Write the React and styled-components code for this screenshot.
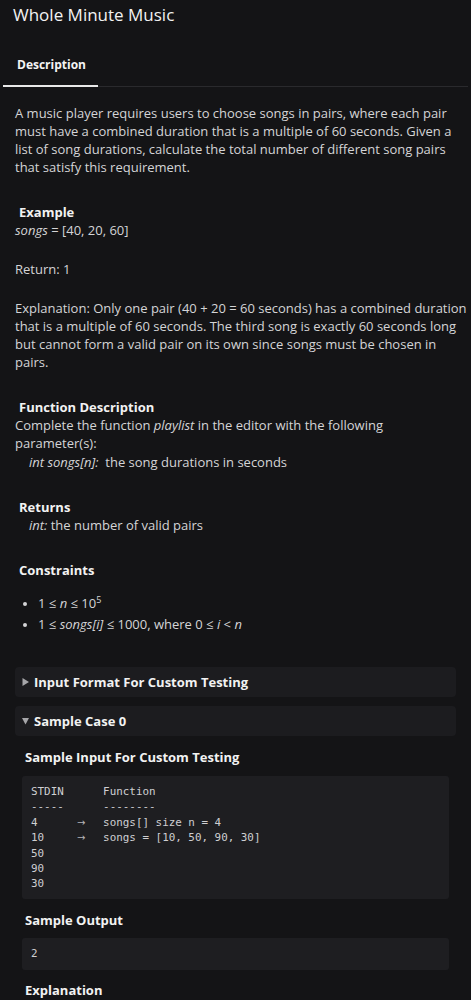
import React from 'react';
import styled, { createGlobalStyle } from 'styled-components';

const GlobalStyle = createGlobalStyle`
  html, body {
    margin: 0;
    padding: 0;
    background: #141416;
  }
  body {
    font-family: "Open Sans", "Noto Sans", sans-serif;
    color: #d4d4d6;
  }
`;

const Page = styled.div`
  width: 471px;
  min-height: 1000px;
  background: #141416;
  overflow: hidden;
`;

const Title = styled.h1`
  margin: 0;
  padding: 3px 13px 0;
  font-size: 17px;
  line-height: 23px;
  font-weight: 400;
  color: #f2f2f2;
`;

const Tabs = styled.div`
  margin: 30px 3px 0;
  display: flex;
  border-bottom: 1px solid #2a2a2d;
`;

const Tab = styled.div`
  width: 95px;
  padding: 0 0 11px 14px;
  box-sizing: border-box;
  font-size: 12px;
  line-height: 18px;
  font-weight: 700;
  color: #f4f4f4;
  border-bottom: ${({ active }) => (active ? '2px solid #e8e8e8' : 'none')};
  margin-bottom: -1px;
`;

const Body = styled.div`
  padding: 17px 15px 0;
`;

const Para = styled.p`
  margin: 0 ${({ wide }) => (wide ? -12 : -3)}px ${({ gap }) => gap ?? 21}px 0;
  font-size: 13px;
  line-height: 18px;
`;

const Heading = styled.h3`
  margin: 0;
  padding-left: 4px;
  font-size: 13px;
  line-height: 17px;
  font-weight: 700;
  color: #f2f2f2;
`;

const Section = styled.div`
  margin-top: ${({ top }) => top ?? 28}px;
`;

const Indent = styled.div`
  padding-left: 14px;
  font-size: 13px;
  line-height: 18px;
  margin-top: ${({ top }) => top ?? 0}px;
`;

const List = styled.ul`
  margin: 14px 0 0;
  padding-left: 23px;
  font-size: 13px;
  line-height: 21px;
  li::marker {
    font-size: 11px;
  }
`;

const Sup = styled.sup`
  font-size: 9px;
  line-height: 0;
`;

const Accordion = styled.div`
  margin-top: ${({ top }) => top ?? 9}px;
  background: #1c1c1f;
  border-radius: 4px;
  height: 30px;
  display: flex;
  align-items: center;
  padding-left: 7px;
  gap: 5px;
  font-size: 13px;
  font-weight: 700;
  color: #f2f2f2;
`;

const Caret = ({ down }) => (
  <svg width="7" height="8" viewBox="0 0 7 8" style={{ flex: 'none' }}>
    {down ? (
      <polygon points="0,1 7,1 3.5,7.5" fill="#a6a6a9" />
    ) : (
      <polygon points="0.5,0 7,4 0.5,8" fill="#a6a6a9" />
    )}
  </svg>
);

const CaseBody = styled.div`
  padding: 12px 7px 0;
`;

const SubHeading = styled.h4`
  margin: 0 0 ${({ gap }) => gap ?? 10}px 3px;
  font-size: 13px;
  line-height: 18px;
  font-weight: 700;
  color: #f2f2f2;
`;

const Code = styled.pre`
  margin: 0 0 ${({ gap }) => gap ?? 11}px;
  background: #1e1e21;
  border-radius: 3px;
  padding: 8px 9px ${({ tall }) => (tall ? 7 : 9)}px;
  font-family: "DejaVu Sans Mono", "Liberation Mono", monospace;
  font-size: 10.9px;
  line-height: 15.4px;
  color: #cfcfd2;
`;

const Arrow = styled.span`
  display: inline-block;
  width: 6.56px;
  font-family: "DejaVu Sans", sans-serif;
  font-size: 10px;
  line-height: 10px;
  color: #b4b4b8;
  text-align: center;
`;

const Row = ({ left, right }) => (
  <>
    {left.padEnd(7, ' ')}
    <Arrow>→</Arrow>
    {'   ' + right}
    {'\n'}
  </>
);

export default function App() {
  return (
    <Page>
      <GlobalStyle />
      <Title>Whole Minute Music</Title>
      <Tabs>
        <Tab active>Description</Tab>
      </Tabs>
      <Body>
        <Para gap={28}>
          A music player requires users to choose songs in pairs, where each pair must have a
          combined duration that is a multiple of 60 seconds. Given a list of song durations,
          calculate the total number of different song pairs that satisfy this requirement.
        </Para>
        <Heading>Example</Heading>
        <Para gap={21}>
          <em>songs</em> = [40, 20, 60]
        </Para>
        <Para>Return: 1</Para>
        <Para gap={0} wide>
          Explanation: Only one pair (40 + 20 = 60 seconds) has a combined duration that is a
          multiple of 60 seconds. The third song is exactly 60 seconds long but cannot form a
          valid pair on its own since songs must be chosen in pairs.
        </Para>

        <Section>
          <Heading>Function Description</Heading>
          <Para gap={0}>
            Complete the function <em>playlist</em> in the editor with the following
            parameter(s):
          </Para>
          <Indent top={1}>
            <em>int songs[n]:</em>&nbsp; the song durations in seconds
          </Indent>
        </Section>

        <Section>
          <Heading>Returns</Heading>
          <Indent>
            <em>int:</em> the number of valid pairs
          </Indent>
        </Section>

        <Section>
          <Heading>Constraints</Heading>
          <List>
            <li>
              1 ≤ <em>n</em> ≤ 10<Sup>5</Sup>
            </li>
            <li>
              1 ≤ <em>songs[i]</em> ≤ 1000, where 0 ≤ <em>i</em> &lt; <em>n</em>
            </li>
          </List>
        </Section>

        <Accordion top={32}>
          <Caret />
          Input Format For Custom Testing
        </Accordion>
        <Accordion>
          <Caret down />
          Sample Case 0
        </Accordion>
        <CaseBody>
          <SubHeading>Sample Input For Custom Testing</SubHeading>
          <Code tall gap={12}>
            {'STDIN      Function\n-----      --------\n'}
            <Row left="4" right="songs[] size n = 4" />
            <Row left="10" right="songs = [10, 50, 90, 30]" />
            {'50\n90\n30'}
          </Code>
          <SubHeading gap={9}>Sample Output</SubHeading>
          <Code>2</Code>
          <SubHeading>Explanation</SubHeading>
        </CaseBody>
      </Body>
    </Page>
  );
}
